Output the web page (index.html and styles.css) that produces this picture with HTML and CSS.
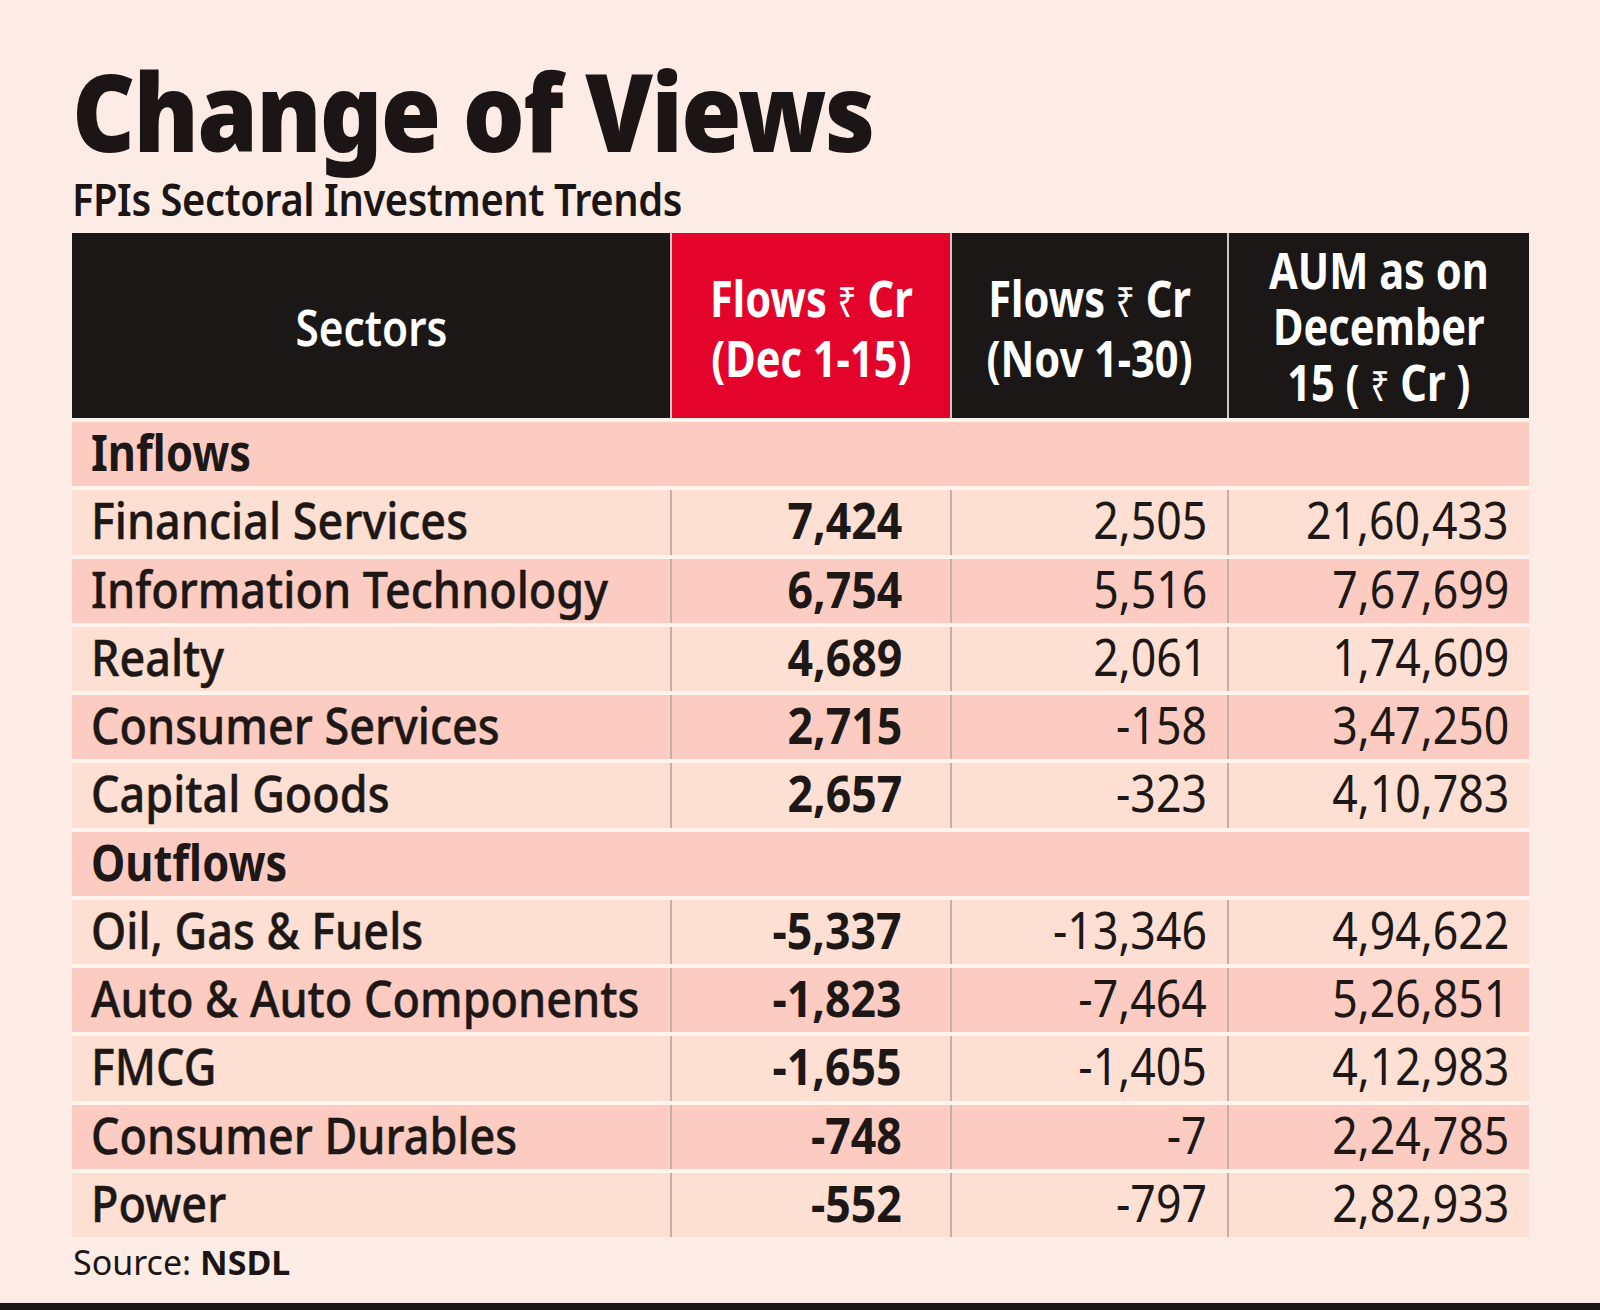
FILE: index.html
```html
<!DOCTYPE html>
<html lang="en">
<head>
<meta charset="utf-8">
<title>Change of Views</title>
<link rel="stylesheet" href="styles.css">
</head>
<body>
<main class="page">
  <h1 class="title"><span class="sx">Change of Views</span></h1>
  <p class="subtitle"><span class="sx">FPIs Sectoral Investment Trends</span></p>
  <div class="table">
    <div class="row head">
      <div class="hcell h-sector"><span class="ht ht-sector">Sectors</span></div>
      <div class="hcell h-red"><span class="ht">Flows <span class="rs">₹</span> Cr<br>(Dec 1-15)</span></div>
      <div class="hcell h-black"><span class="ht">Flows <span class="rs">₹</span> Cr<br>(Nov 1-30)</span></div>
      <div class="hcell h-black"><span class="ht">AUM as on<br>December<br>15 ( <span class="rs">₹</span> Cr )</span></div>
    </div>
    <div class="row band"><div class="band-label"><span class="bt">Inflows</span></div></div>
    <div class="row light">
      <div class="cell label"><span class="lt">Financial Services</span></div>
      <div class="cell num bold c2"><span class="nt">7,424</span></div>
      <div class="cell num"><span class="nt">2,505</span></div>
      <div class="cell num"><span class="nt">21,60,433</span></div>
    </div>
    <div class="row dark">
      <div class="cell label"><span class="lt">Information Technology</span></div>
      <div class="cell num bold c2"><span class="nt">6,754</span></div>
      <div class="cell num"><span class="nt">5,516</span></div>
      <div class="cell num"><span class="nt">7,67,699</span></div>
    </div>
    <div class="row light">
      <div class="cell label"><span class="lt">Realty</span></div>
      <div class="cell num bold c2"><span class="nt">4,689</span></div>
      <div class="cell num"><span class="nt">2,061</span></div>
      <div class="cell num"><span class="nt">1,74,609</span></div>
    </div>
    <div class="row dark">
      <div class="cell label"><span class="lt">Consumer Services</span></div>
      <div class="cell num bold c2"><span class="nt">2,715</span></div>
      <div class="cell num"><span class="nt">-158</span></div>
      <div class="cell num"><span class="nt">3,47,250</span></div>
    </div>
    <div class="row light">
      <div class="cell label"><span class="lt">Capital Goods</span></div>
      <div class="cell num bold c2"><span class="nt">2,657</span></div>
      <div class="cell num"><span class="nt">-323</span></div>
      <div class="cell num"><span class="nt">4,10,783</span></div>
    </div>
    <div class="row band"><div class="band-label"><span class="bt">Outflows</span></div></div>
    <div class="row light">
      <div class="cell label"><span class="lt">Oil, Gas &amp; Fuels</span></div>
      <div class="cell num bold c2"><span class="nt">-5,337</span></div>
      <div class="cell num"><span class="nt">-13,346</span></div>
      <div class="cell num"><span class="nt">4,94,622</span></div>
    </div>
    <div class="row dark">
      <div class="cell label"><span class="lt">Auto &amp; Auto Components</span></div>
      <div class="cell num bold c2"><span class="nt">-1,823</span></div>
      <div class="cell num"><span class="nt">-7,464</span></div>
      <div class="cell num"><span class="nt">5,26,851</span></div>
    </div>
    <div class="row light">
      <div class="cell label"><span class="lt">FMCG</span></div>
      <div class="cell num bold c2"><span class="nt">-1,655</span></div>
      <div class="cell num"><span class="nt">-1,405</span></div>
      <div class="cell num"><span class="nt">4,12,983</span></div>
    </div>
    <div class="row dark">
      <div class="cell label"><span class="lt">Consumer Durables</span></div>
      <div class="cell num bold c2"><span class="nt">-748</span></div>
      <div class="cell num"><span class="nt">-7</span></div>
      <div class="cell num"><span class="nt">2,24,785</span></div>
    </div>
    <div class="row light">
      <div class="cell label"><span class="lt">Power</span></div>
      <div class="cell num bold c2"><span class="nt">-552</span></div>
      <div class="cell num"><span class="nt">-797</span></div>
      <div class="cell num"><span class="nt">2,82,933</span></div>
    </div>
  </div>
  <p class="source">Source: <b>NSDL</b></p>
</main>
<div class="bottom-bar"></div>
</body>
</html>
```

FILE: styles.css
```css
* { box-sizing: border-box; }
html, body { margin: 0; padding: 0; }
body {
  width: 1600px;
  height: 1310px;
  overflow: hidden;
  display: flex;
  flex-direction: column;
  background: #fdece6;
  color: #1d1715;
  font-family: "Noto Sans", "Open Sans", "DejaVu Sans", sans-serif;
}
.page {
  flex: 1;
  padding-left: 72px;
}
.sx {
  display: inline-block;
  white-space: nowrap;
  transform-origin: left center;
}
.title {
  margin: 0;
  padding-top: 57px;
  font-size: 108px;
  line-height: 108px;
  font-weight: 900;
  letter-spacing: -2px;
  color: #1b1615;
}
.title .sx { transform: scaleX(0.904); }
.subtitle {
  margin: 8.5px 0 0;
  font-size: 45px;
  line-height: 50px;
  font-weight: 600;
  letter-spacing: -0.5px;
  color: #1b1615;
}
.subtitle .sx { transform: scaleX(0.886); }

.table {
  margin-top: 9.5px;
  width: 1457px;
  display: flex;
  flex-direction: column;
  gap: 4px;
  background: #fef4ee;
}
.row {
  display: grid;
  grid-template-columns: 598px 280px 277px 302px;
  height: 64.25px;
}
.row.head { height: 185px; }
.row.band { display: block; background: #fccbc2; }
.row.light { background: #fddfd3; }
.row.dark { background: #fccbc2; }

.hcell {
  display: flex;
  align-items: center;
  justify-content: center;
  text-align: center;
  color: #ffffff;
  font-size: 51px;
  line-height: 56px;
  font-weight: 700;
  white-space: nowrap;
}
.ht {
  display: inline-block;
  padding-top: 3px;
  transform: scaleX(0.815);
  transform-origin: center center;
}
.ht-sector { font-weight: 600; padding-top: 0; transform: scaleX(0.83); }
.h-sector { background: #1a1716; }
.h-red { background: #e3032b; border-left: 2px solid #cfc7c5; }
.h-black { background: #1a1716; border-left: 2px solid #cfc7c5; }
.rs { font-weight: 400; font-size: 0.8em; }

.band-label {
  padding: 0 0 6px 19px;
  font-size: 51px;
  line-height: 58px;
  height: 64.25px;
  display: flex;
  align-items: center;
  font-weight: 700;
}
.bt {
  display: inline-block;
  white-space: nowrap;
  transform: scaleX(0.85);
  transform-origin: left center;
}
.cell {
  display: flex;
  align-items: center;
  padding-bottom: 6px;
  font-size: 51px;
  line-height: 58px;
  white-space: nowrap;
}
.cell + .cell { border-left: 2px solid #c4b0a9; }
.label { padding-left: 19px; font-weight: 500; }
.lt {
  display: inline-block;
  transform: scaleX(0.882);
  transform-origin: left center;
  -webkit-text-stroke: 0.5px #1d1715;
}
.num { justify-content: flex-end; padding-right: 20px; font-weight: 400; }
.num.c2 { padding-right: 48px; }
.nt {
  display: inline-block;
  transform: scaleX(0.875);
  transform-origin: right center;
}
.bold { font-weight: 700; }

.source {
  margin: 4px 0 0 1px;
  font-size: 34px;
  line-height: 42px;
  font-weight: 400;
  color: #1b1615;
}
.source b { font-weight: 700; }
.bottom-bar {
  height: 7px;
  background: #1a1716;
}
```
